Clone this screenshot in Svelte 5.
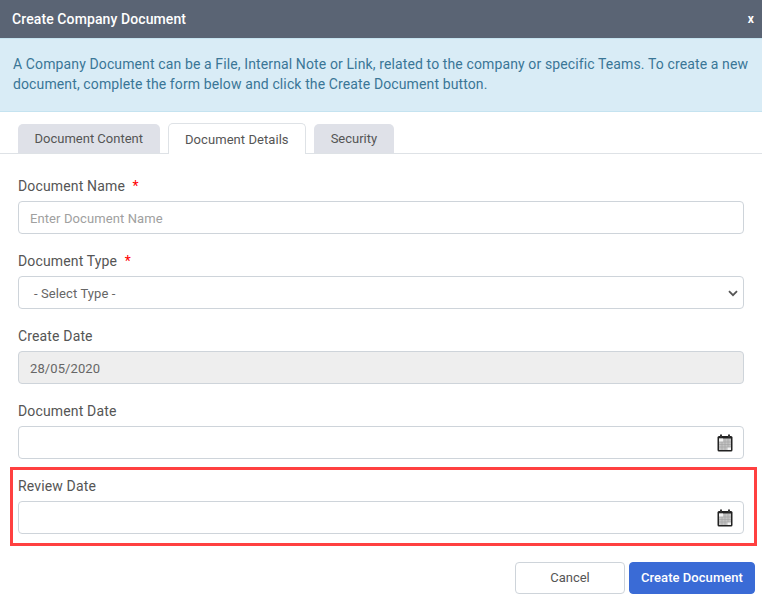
<script>
	const tabs = [
		{ label: 'Document Content', active: false },
		{ label: 'Document Details', active: true },
		{ label: 'Security', active: false }
	];
</script>

{#snippet calendar()}
	<svg class="cal" width="16" height="18" viewBox="0 0 16 18" aria-hidden="true">
		<rect x="0.5" y="2" width="15" height="15.5" rx="1.5" fill="#222" />
		<rect x="3" y="0.5" width="2" height="3" fill="#333" />
		<rect x="11" y="0.5" width="2" height="3" fill="#333" />
		<rect x="2" y="4.5" width="12" height="11.5" fill="#c4c4c4" />
		<path d="M2 8h12M2 10.5h12M2 13h12M5 5v11M8 5v11M11 5v11" stroke="#a2a2a2" stroke-width="0.6" />
		<rect x="2" y="4.5" width="4" height="3" fill="#f2f2f2" />
		<rect x="10.5" y="13.5" width="3.5" height="2.5" fill="#f2f2f2" />
	</svg>
{/snippet}

<div class="modal">
	<header class="title">
		<span>Create Company Document</span>
		<span class="close">x</span>
	</header>

	<div class="alert">
		A Company Document can be a File, Internal Note or Link, related to the company or specific Teams. To create a new document, complete the form below and click the Create Document button.
	</div>

	<div class="body">
		<ul class="tabs">
			{#each tabs as tab}
				<li class="tab" class:active={tab.active}>{tab.label}</li>
			{/each}
		</ul>

		<form class="form">
			<div class="field">
				<div class="label">Document Name <span class="req">*</span></div>
				<div class="control placeholder">Enter Document Name</div>
			</div>
			<div class="field">
				<div class="label">Document Type <span class="req">*</span></div>
				<div class="control select">
					<span>- Select Type -</span>
					<svg width="10" height="7" viewBox="0 0 10 7" aria-hidden="true">
						<path d="M1 1.2l4 4 4-4" fill="none" stroke="#555" stroke-width="1.8" />
					</svg>
				</div>
			</div>
			<div class="field">
				<div class="label">Create Date</div>
				<div class="control disabled">28/05/2020</div>
			</div>
			<div class="field">
				<div class="label">Document Date</div>
				<div class="control date">{@render calendar()}</div>
			</div>
			<div class="field highlighted">
				<div class="label">Review Date</div>
				<div class="control date">{@render calendar()}</div>
			</div>
		</form>

		<div class="actions">
			<button type="button" class="btn cancel">Cancel</button>
			<button type="button" class="btn primary">Create Document</button>
		</div>
	</div>
</div>

<style>
	:global(body) {
		margin: 0;
		background: #fff;
	}

	.modal {
		width: 762px;
		height: 602px;
		overflow: hidden;
		font-family: Roboto, 'Liberation Sans', sans-serif;
		font-size: 13px;
		color: #555;
		box-sizing: border-box;
	}

	.title {
		height: 38px;
		box-sizing: border-box;
		padding: 0 8px 0 12px;
		background: #5a6474;
		color: #fff;
		font-size: 14px;
		font-weight: 500;
		letter-spacing: 0.1px;
		display: flex;
		align-items: center;
		justify-content: space-between;
	}

	.close {
		font-weight: 700;
		font-size: 12px;
	}

	.alert {
		height: 74px;
		box-sizing: border-box;
		padding: 15px 13px 0;
		background: #d9ecf6;
		border-top: 1px solid #c5e3f0;
		border-bottom: 1px solid #c5e3f0;
		color: #3a7696;
		font-size: 14px;
		line-height: 20px;
		letter-spacing: 0.12px;
	}

	.body {
		padding-top: 12px;
	}

	.tabs {
		list-style: none;
		margin: 0;
		padding: 0 0 0 18px;
		display: flex;
		gap: 8px;
		height: 30px;
		box-sizing: border-box;
		border-bottom: 1px solid #dee2e6;
	}

	.tab {
		height: 29px;
		box-sizing: border-box;
		padding: 0 16.5px;
		display: flex;
		align-items: center;
		background: #dfe1e8;
		border-radius: 5px 5px 0 0;
		color: #555;
	}

	.tab.active {
		background: #fff;
		border: 1px solid #dee2e6;
		border-bottom: 0;
		margin-top: -1px;
		height: 31px;
		padding: 0 16.5px;
		letter-spacing: 0.06px;
	}

	.form {
		padding: 0 18px;
		display: flex;
		flex-direction: column;
		margin-top: 24px;
		gap: 19px;
	}

	.field {
		display: flex;
		flex-direction: column;
		gap: 6px;
	}

	.highlighted {
		position: relative;
	}

	.highlighted::before {
		content: '';
		position: absolute;
		left: -8px;
		right: -13px;
		top: -11px;
		bottom: -12px;
		border: 3px solid #ff4040;
		pointer-events: none;
	}

	.label {
		height: 17px;
		line-height: 17px;
		font-size: 14px;
		letter-spacing: 0.15px;
		color: #555;
	}

	.req {
		color: #f00;
		margin-left: 4px;
	}

	.control {
		height: 33px;
		box-sizing: border-box;
		padding: 1px 11px 0;
		border: 1px solid #ced4da;
		border-radius: 4px;
		display: flex;
		align-items: center;
		background: #fff;
		font-size: 13px;
		letter-spacing: 0.1px;
		color: #666;
	}

	.placeholder {
		color: #a0a0a0;
	}

	.select {
		justify-content: space-between;
		padding: 1px 5px 0 15px;
	}

	.disabled {
		background: #eee;
	}

	.date {
		justify-content: flex-end;
		padding: 0 10px 0 0;
	}

	.actions {
		display: flex;
		justify-content: flex-end;
		gap: 4px;
		padding: 0 7px 0 0;
		margin-top: 28px;
	}

	.btn {
		height: 32px;
		box-sizing: border-box;
		border-radius: 4px;
		font-family: inherit;
		font-size: 13px;
		padding: 0 0 2px;
	}

	.cancel {
		width: 110px;
		background: #fff;
		border: 1px solid #ced4da;
		color: #555;
	}

	.primary {
		width: 126px;
		background: #3a6bd6;
		border: 1px solid #3a6bd6;
		color: #fff;
		font-weight: 500;
		letter-spacing: 0.05px;
	}
</style>
